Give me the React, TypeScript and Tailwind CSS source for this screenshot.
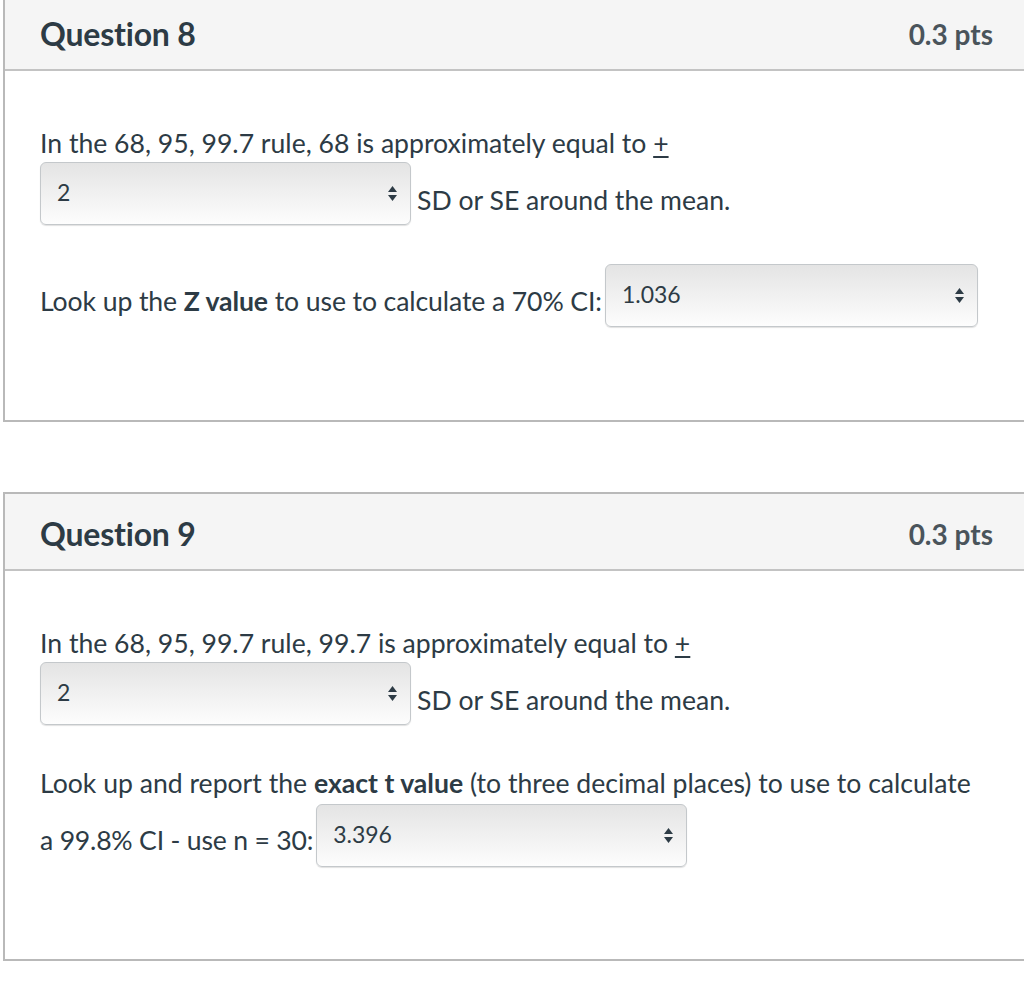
import React from "react";

function Arrows() {
  return (
    <svg width="9" height="15" viewBox="0 0 9 15" className="shrink-0">
      <path d="M4.5 0 L9 6 L0 6 Z" fill="#2d3b45" />
      <path d="M0 9 L9 9 L4.5 15 Z" fill="#2d3b45" />
    </svg>
  );
}

function Select({ value, width }: { value: string; width: string }) {
  return (
    <div
      className={`${width} h-[63px] shrink-0 rounded-[6px] border border-[#c4c8cb] bg-linear-to-b from-[#e4e4e4] to-[#fdfdfd] shadow-[0_1px_1px_rgba(0,0,0,0.12)] flex items-center justify-between pl-[16px] pr-[13px]`}
    >
      <span className="text-[23px] leading-[30px] text-[#2d3b45] -mt-[3px]">{value}</span>
      <Arrows />
    </div>
  );
}

function Card({
  title,
  children,
  className = "",
  bodyClass = "pb-[92px]",
}: {
  title: string;
  children: React.ReactNode;
  className?: string;
  bodyClass?: string;
}) {
  return (
    <div className={`w-[1028px] ml-[3px] border-2 border-[#b9b9b9] border-r-0 ${className}`}>
      <div className="h-[77px] bg-[#f5f5f5] border-b-2 border-[#c3c3c3] flex items-center justify-between pl-[35px] pr-[38px] pt-[4px]">
        <h2 className="text-[32px] font-bold text-[#2d3b45] tracking-[-0.2px]">{title}</h2>
        <span className="text-[28px] font-bold text-[#4a545b]">0.3 pts</span>
      </div>
      <div className={`bg-white pl-[35px] pt-[54px] ${bodyClass} text-[26.6px] leading-[36px] text-[#2d3b45]`}>
        {children}
      </div>
    </div>
  );
}

export default function App() {
  return (
    <div
      className="w-[1024px] h-[990px] overflow-hidden bg-white"
      style={{ fontFamily: "Lato, 'Open Sans', sans-serif" }}
    >
      <Card title="Question 8" className="-mt-[6px] border-t-0" bodyClass="pb-[93px]">
        <p>
          In the 68, 95, 99.7 rule, 68 is approximately equal to <span className="underline underline-offset-[3px]">+</span>
        </p>
        <div className="flex items-center mt-[1px]">
          <Select value="2" width="w-[371px]" />
          <span className="ml-[6px] mt-[13px]">SD or SE around the mean.</span>
        </div>
        <div className="flex items-center mt-[39px]">
          <span className="mt-[11px] mr-[3px] tracking-[-0.1px]">
            Look up the <b>Z value</b> to use to calculate a 70% CI:
          </span>
          <Select value="1.036" width="w-[373px]" />
        </div>
      </Card>

      <Card title="Question 9" className="mt-[70px]" bodyClass="pb-[92px]">
        <p>
          In the 68, 95, 99.7 rule, 99.7 is approximately equal to <span className="underline underline-offset-[3px]">+</span>
        </p>
        <div className="flex items-center mt-[1px]">
          <Select value="2" width="w-[371px]" />
          <span className="ml-[6px] mt-[13px]">SD or SE around the mean.</span>
        </div>
        <p className="mt-[40px]">
          Look up and report the <b>exact t value</b> (to three decimal places) to use to calculate
        </p>
        <div className="flex items-center mt-[3px]">
          <span className="mt-[8px] mr-[3px] tracking-[-0.2px]">a 99.8% CI - use n = 30:</span>
          <Select value="3.396" width="w-[371px]" />
        </div>
      </Card>
    </div>
  );
}
